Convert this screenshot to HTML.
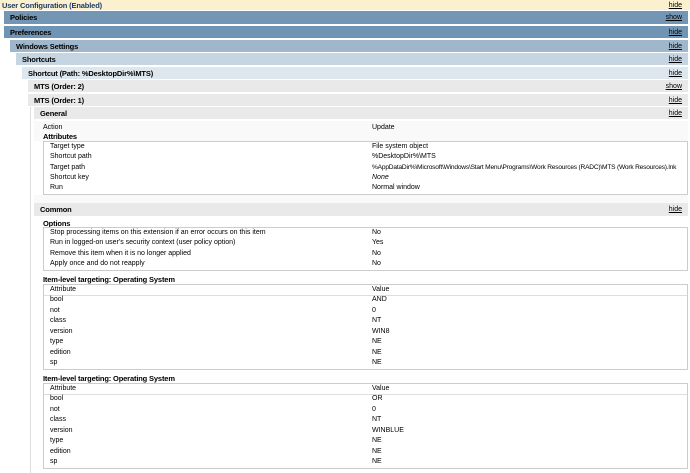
<!DOCTYPE html>
<html><head><style>
*{margin:0;padding:0;box-sizing:border-box}
body{width:690px;height:473px;overflow:hidden;background:#fff;font-family:"Liberation Sans",sans-serif;font-size:7px;color:#000;position:relative}
.b{position:absolute;right:2px;height:13px;font-weight:bold;font-size:7.5px;line-height:13px;padding-left:6px;border-bottom:1px solid #fff;letter-spacing:-0.15px}
.b a{position:absolute;right:6px;top:0;font-weight:normal;font-size:7px;color:#000;text-decoration:underline;letter-spacing:0}
.t{position:absolute;white-space:nowrap;line-height:10px}
.box{position:absolute;left:43px;right:2px;border:1px solid #ccc;background:#fff}
.bd{font-weight:bold;font-size:7.5px;letter-spacing:-0.15px}
</style></head><body>
<div class="b" style="left:0;right:0;top:0;height:11px;line-height:11px;background:#fbf1cf;color:#1d3c6b;padding-left:2px">User Configuration (Enabled)<a style="right:8px;line-height:11px">hide</a></div>
<div class="b" style="left:4px;top:11px;height:14px;background:#7396b4">Policies<a>show</a></div>
<div class="b" style="left:4px;top:26px;background:#7095b4">Preferences<a>hide</a></div>
<div class="b" style="left:10px;top:40px;background:#a0b7cb">Windows Settings<a>hide</a></div>
<div class="b" style="left:16px;top:53px;background:#c5d5e2">Shortcuts<a>hide</a></div>
<div class="b" style="left:22px;top:67px;background:#dfe7ee">Shortcut (Path: %DesktopDir%\MTS)<a>hide</a></div>
<div class="b" style="left:28px;top:80px;background:#e9e9e9">MTS (Order: 2)<a>show</a></div>
<div class="b" style="left:28px;top:94px;background:#e9e9e9">MTS (Order: 1)<a>hide</a></div>
<div class="b" style="left:34px;top:107px;background:#e9e9e9">General<a>hide</a></div>
<div style="position:absolute;left:30px;top:107px;width:1px;height:366px;background:#ddd"></div>
<div style="position:absolute;left:34px;top:121px;right:2px;height:20px;background:#f9f9f9"></div>
<div class="t" style="left:43px;top:123px">Action</div><div class="t" style="left:372px;top:123px">Update</div>
<div class="t bd" style="left:43px;top:132px">Attributes</div>
<div class="box" style="top:141px;height:54px"></div>
<div class="t" style="left:50px;top:142px">Target type</div><div class="t" style="left:372px;top:142px">File system object</div>
<div class="t" style="left:50px;top:152px">Shortcut path</div><div class="t" style="left:372px;top:152px">%DesktopDir%\MTS</div>
<div class="t" style="left:50px;top:163px">Target path</div><div class="t" style="left:372px;top:163px;font-size:6.6px;letter-spacing:-0.2px">%AppDataDir%\Microsoft\Windows\Start Menu\Programs\Work Resources (RADC)\MTS (Work Resources).lnk</div>
<div class="t" style="left:50px;top:173px">Shortcut key</div><div class="t" style="left:372px;top:173px;font-style:italic">None</div>
<div class="t" style="left:50px;top:183px">Run</div><div class="t" style="left:372px;top:183px">Normal window</div>
<div style="position:absolute;left:34px;top:195px;right:2px;height:8px;background:#f9f9f9"></div>
<div class="b" style="left:34px;top:203px;height:14px;line-height:14px;background:#e9e9e9">Common<a style="line-height:14px">hide</a></div>
<div class="t bd" style="left:43px;top:219px">Options</div>
<div class="box" style="top:227px;height:44px"></div>
<div class="t" style="left:50px;top:228px">Stop processing items on this extension if an error occurs on this item</div><div class="t" style="left:372px;top:228px">No</div>
<div class="t" style="left:50px;top:238px">Run in logged-on user's security context (user policy option)</div><div class="t" style="left:372px;top:238px">Yes</div>
<div class="t" style="left:50px;top:249px">Remove this item when it is no longer applied</div><div class="t" style="left:372px;top:249px">No</div>
<div class="t" style="left:50px;top:259px">Apply once and do not reapply</div><div class="t" style="left:372px;top:259px">No</div>

<div class="t bd" style="left:43px;top:275px">Item-level targeting: Operating System</div>
<div class="box" style="top:284px;height:86px"></div>
<div style="position:absolute;left:44px;right:3px;top:295px;height:1px;background:#ddd"></div>
<div class="t" style="left:50px;top:285px">Attribute</div><div class="t" style="left:372px;top:285px">Value</div>
<div class="t" style="left:50px;top:295px">bool</div><div class="t" style="left:372px;top:295px">AND</div>
<div class="t" style="left:50px;top:306px">not</div><div class="t" style="left:372px;top:306px">0</div>
<div class="t" style="left:50px;top:316px">class</div><div class="t" style="left:372px;top:316px">NT</div>
<div class="t" style="left:50px;top:327px">version</div><div class="t" style="left:372px;top:327px">WIN8</div>
<div class="t" style="left:50px;top:337px">type</div><div class="t" style="left:372px;top:337px">NE</div>
<div class="t" style="left:50px;top:348px">edition</div><div class="t" style="left:372px;top:348px">NE</div>
<div class="t" style="left:50px;top:358px">sp</div><div class="t" style="left:372px;top:358px">NE</div>

<div class="t bd" style="left:43px;top:374px">Item-level targeting: Operating System</div>
<div class="box" style="top:383px;height:86px"></div>
<div style="position:absolute;left:44px;right:3px;top:394px;height:1px;background:#ddd"></div>
<div class="t" style="left:50px;top:384px">Attribute</div><div class="t" style="left:372px;top:384px">Value</div>
<div class="t" style="left:50px;top:394px">bool</div><div class="t" style="left:372px;top:394px">OR</div>
<div class="t" style="left:50px;top:405px">not</div><div class="t" style="left:372px;top:405px">0</div>
<div class="t" style="left:50px;top:415px">class</div><div class="t" style="left:372px;top:415px">NT</div>
<div class="t" style="left:50px;top:426px">version</div><div class="t" style="left:372px;top:426px">WINBLUE</div>
<div class="t" style="left:50px;top:436px">type</div><div class="t" style="left:372px;top:436px">NE</div>
<div class="t" style="left:50px;top:447px">edition</div><div class="t" style="left:372px;top:447px">NE</div>
<div class="t" style="left:50px;top:457px">sp</div><div class="t" style="left:372px;top:457px">NE</div>
</body></html>
